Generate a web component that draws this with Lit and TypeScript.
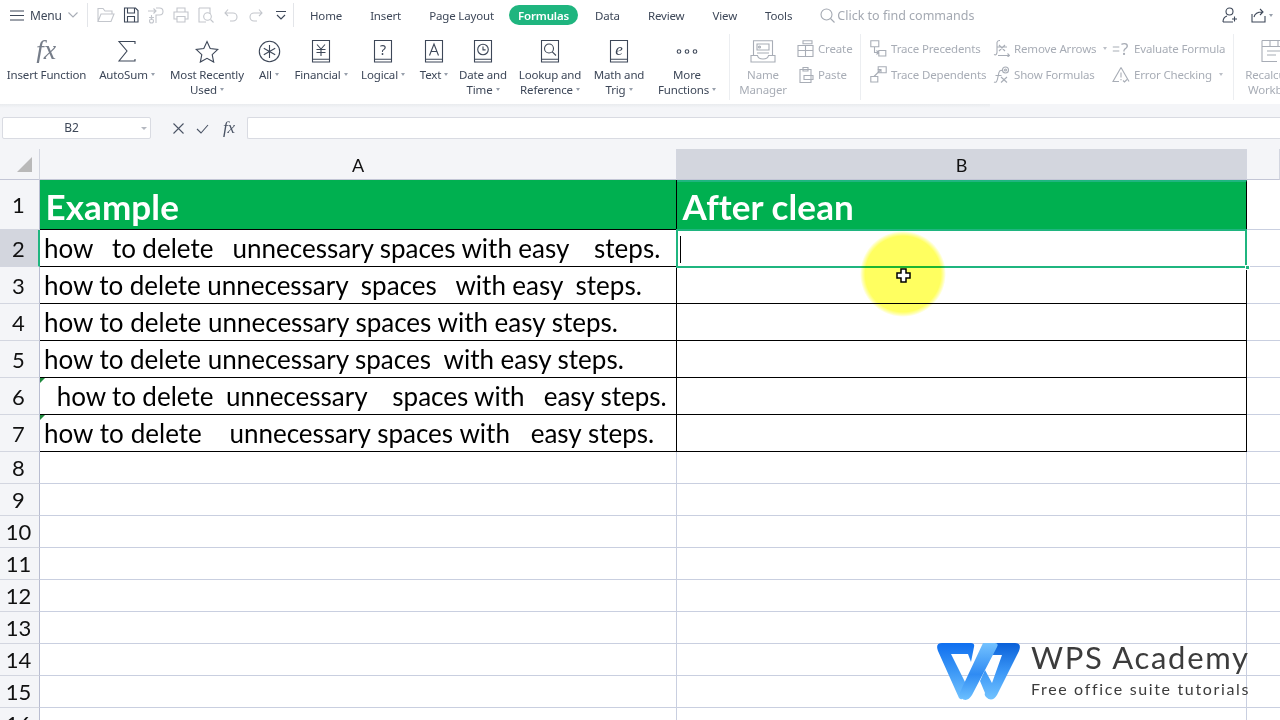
import { LitElement, html, css, svg } from "lit";
import { customElement } from "lit/decorators.js";

const ic = (w: number, h: number, body: unknown, cls = "") =>
  html`<svg class="ic ${cls}" width=${w} height=${h} viewBox="0 0 ${w} ${h}">${body}</svg>`;

const book = (inner: unknown) =>
  ic(20, 23, svg`<path d="M1.5 .5h17v21.5h-17zM1.5 19.2h17"/>${inner}`);
const lbl = (x: number, y: number, t: string, size: number, style = "normal") =>
  svg`<text x=${x} y=${y} text-anchor="middle" font-size=${size} font-style=${style} font-family="Liberation Serif, serif" fill="currentColor" stroke="none">${t}</text>`;
const sans = (x: number, y: number, t: string, size: number) =>
  svg`<text x=${x} y=${y} text-anchor="middle" font-size=${size} font-family="Noto Sans, sans-serif" fill="currentColor" stroke="none">${t}</text>`;

const bigIcons: Record<string, unknown> = {
  fx: ic(26, 23, svg`<g opacity=".7">${lbl(12, 19, "fx", 28, "italic")}</g>`),
  sum: ic(20, 23, svg`<path d="M18 4V1.5H2l8 9.5-8 10h16V19"/>`),
  star: ic(24, 23, svg`<path d="M12 1.500l3.200 7 7.600.9-5.600 5.200 1.500 7.500L12 18.300l-6.700 3.800 1.500-7.500L1.200 9.400l7.600-.9z"/>`),
  all: ic(23, 23, svg`<circle cx="11.5" cy="11.5" r="10.2"/><path d="M11.5 5v13M5.8 8.2l11.4 6.6M17.2 8.2L5.8 14.8"/>`),
  fin: book(svg`<path d="M6 4.5l4 4.5 4-4.5M5.5 9.5h9M5.5 12.500h9M10 9v7"/>`),
  log: book(sans(10, 15, "?", 14)),
  txt: book(svg`<path d="M5.500 15.500L10 4l4.500 11.500M7 11.500h6"/>`),
  date: book(svg`<circle cx="10" cy="9.500" r="5.300"/><path d="M10 6.500v3.400h2.600"/>`),
  look: book(svg`<circle cx="9" cy="8.500" r="4.500"/><path d="M12.300 11.800l3.700 3.700"/>`),
  math: book(lbl(10, 15, "e", 17, "italic")),
  more: ic(24, 23, svg`<circle cx="4" cy="11.5" r="1.8"/><circle cx="12" cy="11.5" r="1.8"/><circle cx="20" cy="11.5" r="1.8"/>`),
  name: ic(28, 23, svg`<path d="M4.500 16V.8h19V16M2 15.500h6.500c.5 3 2 3.500 5.500 3.500s5-.5 5.500-3.500H26v6.500H2zM8 4h12v6H8zM8 13h12"/><circle cx="10.500" cy="7" r="1"/>`),
  recalc: ic(28, 23, svg`<path d="M1 .5h25v20M1 .5v21h15M1 6.500h25M9 .5v6M17 .5v6M6 11h13M6 15h9M23 11v9M20.500 17.500l2.500 3 2.500-3"/>`),
};

const smallIcons: Record<string, unknown> = {
  create: ic(17, 17, svg`<path d="M1 5.500h15v11H1zM1 10.500h15M8.500 5.500v11M6 .8h9v3H6z"/>`),
  paste: ic(17, 17, svg`<path d="M3 3.500h11v13H3zM6 1.500h5v3.500H6zM7 9.500h9v4H7z"/>`),
  prec: ic(17, 17, svg`<path d="M.8 .8h8v6h-8zM8.800 10.500h7v5.500h-7zM4.500 7v5.500h4M6.500 10.500l2 2-2 2"/>`),
  dep: ic(17, 17, svg`<path d="M8.200 .8h8v6h-8zM.8 10.500h7v5.500h-7zM4 10.500l7-7M7.500 3.500H11V7"/>`),
  rem: ic(17, 17, svg`<path d="M1 14.500c2 1 2.500 0 3-2V2.500c.5-2 1-2 3-2M4 7h10M6 5l6 6M12 5l-6 6M5 15.500h11M14.500 13.500l2 2-2 1.500"/>`),
  show: ic(17, 17, svg`<path d="M1 16c2 1 3-.5 3.500-3l1.300-6C6.300 5 7 4 9 4.500M2.500 9.500h6M8 11l6 5.500M14 11l-6 5.500"/><circle cx="12.500" cy="4" r="3"/><circle cx="12.500" cy="4" r="1"/>`),
  evalf: ic(18, 17, svg`<path d="M.8 7h6.500M.8 11h6.500"/>${sans(12.500, 14.500, "?", 17)}`),
  err: ic(18, 17, svg`<path d="M9 1.500L1 15.500h6M9 1.500l8 14M9 6.500v5M9 13v1.200M11 14.500l1.500 1.500 2.500-2.500"/>`),
};

const big = [
  { w: 87, l: ["Insert Function"], i: "fx" },
  { w: 74, l: ["AutoSum"], i: "sum", c: 1 },
  { w: 86, l: ["Most Recently", "Used"], i: "star", c: 1 },
  { w: 38, l: ["All"], i: "all", c: 1 },
  { w: 66, l: ["Financial"], i: "fin", c: 1 },
  { w: 58, l: ["Logical"], i: "log", c: 1 },
  { w: 44, l: ["Text"], i: "txt", c: 1 },
  { w: 54, l: ["Date and", "Time"], i: "date", c: 1 },
  { w: 80, l: ["Lookup and", "Reference"], i: "look", c: 1 },
  { w: 58, l: ["Math and", "Trig"], i: "math", c: 1 },
  { w: 78, l: ["More", "Functions"], i: "more", c: 1 },
];

const tabs = ["Home", "Insert", "Page Layout", "Formulas", "Data", "Review", "View", "Tools"];
const rows = [
  { t: "Example", ws: 0 },
  { t: "how   to delete   unnecessary spaces with easy    steps.", ws: -0.3 },
  { t: "how to delete unnecessary  spaces   with easy  steps.", ws: -0.25 },
  { t: "how to delete unnecessary spaces with easy steps.", ws: 0 },
  { t: "how to delete unnecessary spaces  with easy steps.", ws: -0.1 },
  { t: "  how to delete  unnecessary    spaces with   easy steps.", ws: -0.3 },
  { t: "how to delete    unnecessary spaces with   easy steps.", ws: 0.25 },
];

@customElement("app-root")
export class AppRoot extends LitElement {
  static styles = css`
    :host { display: block; width: 1280px; height: 720px; overflow: hidden; position: relative; background: #fff; font-family: "Noto Sans", sans-serif; font-size: 11.5px; letter-spacing: -.15px; color: #3d4758; }
    .ic { display: block; flex: none; fill: none; stroke: currentColor; stroke-width: 1.1; }
    .top { height: 32px; display: flex; align-items: center; padding-left: 10px; }
    .menu { display: flex; align-items: center; gap: 6px; width: 77px; flex: none; font-size: 12px; margin-top: -2px; }
    .vsep { width: 1px; height: 24px; background: #e3e5e9; flex: none; margin-top: -2px; }
    .qat { display: flex; align-items: center; padding-left: 5px; width: 205px; box-sizing: border-box; color: #c3c6cc; flex: none; margin-top: -2px; }
    .qbox { width: 25px; display: flex; justify-content: center; flex: none; }
    .qat .on { color: #3d4758; }
    .tabs { display: flex; align-items: center; padding-left: 16px; flex: none; height: 32px; margin-top: -2px; }
    .tab { height: 20px; line-height: 21px; white-space: nowrap; margin-right: 28px; }
    .tab.pre { margin-right: 15px; }
    .tab.act { background: #1fb57f; color: #fff; font-weight: 600; margin-right: 17px; width: 69px; text-align: center; border-radius: 10px; }
    .search { display: flex; align-items: center; gap: 2px; color: #a4a9b2; font-size: 12.5px; letter-spacing: 0; flex: none; margin-top: -2px; }
    .right { position: absolute; left: 1222px; top: 7px; display: flex; gap: 13px; align-items: center; color: #3d4758; }
    .right i { border: 2.500px solid transparent; border-top: 3px solid #98a0ac; border-bottom: 0; margin-left: -11px; }
    .ribbon { height: 72px; display: flex; overflow: hidden; padding-left: 3px; }
    .item { flex: none; padding-top: 8px; display: flex; flex-direction: column; align-items: center; box-sizing: border-box; }
    .item .iconbox { height: 22px; display: flex; align-items: center; justify-content: center; }
    .item .lbl { margin-top: 5px; line-height: 15px; text-align: center; white-space: nowrap; }
    .caret { display: inline-block; width: 0; height: 0; border: 2.500px solid transparent; border-top: 3px solid #98a0ac; border-bottom: 0; margin-left: 3px; vertical-align: 3px; }
    .off { color: #a8adb6; }
    .off .caret { border-top-color: #bcc0c7; }
    .rsep { width: 1px; height: 66px; margin-top: 2px; background: #eceef1; flex: none; }
    .rsep.first { margin-left: 3px; }
    .colname { width: 64px; padding-left: 1px; }
    .coltrace { width: 132px; padding-left: 9px; }
    .colrem { width: 119px; }
    .coleval { width: 121px; }
    .w66 { width: 66px; }
    .w82 { width: 82px; }
    .col { flex: none; padding-top: 3px; box-sizing: border-box; }
    .small { height: 26px; display: flex; align-items: center; gap: 4px; white-space: nowrap; }
    .formula { height: 45px; background: #f4f5f8; position: relative; display: flex; align-items: center; padding-left: 2px; padding-top: 3px; box-sizing: border-box; }
    .formula::before { content: ""; position: absolute; left: 0; top: 0; width: 990px; height: 4px; background: linear-gradient(#e9ebee, #f4f5f8); }
    .namebox { width: 149px; height: 22px; box-sizing: border-box; border: 1px solid #d9dbe2; border-radius: 2px; background: #fff; text-align: center; line-height: 20px; flex: none; position: relative; padding-right: 10px; font-size: 12px; }
    .namebox i { position: absolute; right: 3px; top: 9px; border: 3px solid transparent; border-top: 3px solid #b4b8c0; border-bottom: 0; }
    .fb { display: flex; align-items: center; color: #4a5364; margin-left: 21px; gap: 11px; flex: none; width: 75px; }
    .input { flex: 1; height: 22px; box-sizing: border-box; border: 1px solid #d9dbe2; border-right: 0; border-radius: 2px 0 0 2px; background: #fff; }
    .sheet { display: grid; grid-template-columns: 40px 637px 570px 33px; grid-template-rows: 31px 50px repeat(6, 37px) repeat(9, 32px); font-family: Lato, sans-serif; letter-spacing: 0; background: #fff; color: #000; height: 571px; overflow: hidden; }
    .cell { box-sizing: border-box; position: relative; white-space: pre; overflow: hidden; }
    .ch { background: #f4f5f8; border-right: 1px solid #d3d6e0; border-bottom: 1px solid #c3c6d6; text-align: center; font-size: 18px; line-height: 32px; color: #111; }
    .ch.sel, .rh.sel { background: #d3d6de; }
    .corner svg { position: absolute; left: 17px; top: 8px; }
    .rh { background: #f4f5f8; border-right: 1px solid #b9bdd1; border-bottom: 1px solid #d3d6e0; font-size: 22px; display: flex; align-items: center; justify-content: center; padding-right: 2px; color: #111; }
    .rh.sel { border-right: 2px solid #1fb57f; padding-right: 1px; }
    .g { border-right: 1px solid #c9cfe0; border-bottom: 1px solid #c9cfe0; }
    .none { border-bottom: 1px solid #c9cfe0; }
    .t { border-right: 1px solid #000; border-bottom: 1px solid #000; font-size: 26px; line-height: 36px; padding-left: 4px; }
    .hd { background: #00b050; color: #fff; font-weight: 700; font-size: 35px; letter-spacing: .1px; line-height: 52px; padding-left: 5.500px; }
    .hd.b { border-top: 2px solid #1fb57f; line-height: 48px; }
    .mark { position: absolute; left: 0; top: 0; width: 0; height: 0; border-top: 5px solid #1f8a3d; border-right: 5px solid transparent; }
    .selbox { position: absolute; left: 676px; top: 229px; width: 571px; height: 39px; box-sizing: border-box; border: 2px solid #1fb57f; pointer-events: none; }
    .caretline { position: absolute; left: 680px; top: 236px; width: 1px; height: 27px; background: #000; }
    .handle { position: absolute; left: 1245px; top: 265px; width: 5px; height: 5px; background: #1fb57f; border: 1px solid #fff; box-sizing: border-box; }
    .spot { position: absolute; left: 860px; top: 231px; width: 86px; height: 86px; border-radius: 50%; background: radial-gradient(circle closest-side, #ffff60 0 88%, #ffffa8 94%, rgba(255,255,200,0) 100%); mix-blend-mode: multiply; }
    .cursor { position: absolute; left: 896px; top: 268px; }
    .logo { position: absolute; left: 937px; top: 643px; }
    .wm { position: absolute; left: 1031px; top: 638px; color: #3c3c3c; white-space: nowrap; letter-spacing: 0; }
    .wm .a { font-size: 31px; line-height: 38px; letter-spacing: 1.7px; font-family: Lato, sans-serif; font-weight: 400; }
    .wm .b { font-size: 16px; line-height: 22px; letter-spacing: 1.65px; font-family: Lato, sans-serif; margin-top: 2px; }
  `;

  render() {
    const qat = [
      ic(18, 16, svg`<path d="M1 14.500V1.500h5l2 2.500h7v3M1 14.500l3-7.500h13l-3 7.500z"/>`),
      ic(16, 16, svg`<path d="M1.500 1h11l2.500 2.500V15H1.500zM4.500 1v5h7V1M4.500 15V9.500h7V15"/>`, "on"),
      ic(18, 17, svg`<path d="M1 4h8M6.500 1.500L9 4 6.500 6.500M9 1h3.500a3.500 3.500 0 010 7H9v8M4.500 8v5M2 10.500h5"/><circle cx="4.500" cy="14" r="2"/>`),
      ic(16, 16, svg`<path d="M4 5V1h8v4M4 12H1V5h14v7h-3M4 9.500h8V15H4z"/>`),
      ic(16, 16, svg`<path d="M1 1h11v6M1 1v14h7"/><circle cx="9.500" cy="9.500" r="3.800"/><path d="M12.500 12.500L15.500 15.500"/>`),
      ic(14, 14, svg`<path d="M1 5h8a4 4 0 010 8H6M4 1.500L1 5l3 3"/>`),
      ic(14, 14, svg`<path d="M13 5H5a4 4 0 000 8h3M10 1.500L13 5l-3 3"/>`),
      ic(10, 9, svg`<path d="M0 .5h10M1 4l4 4 4-4"/>`, "on"),
    ];
    return html`
      <div class="top">
        <div class="menu">
          ${ic(14, 11, svg`<path d="M0 1h14M0 5.500h14M0 10h14"/>`)}
          <span>Menu</span>
          ${ic(10, 6, svg`<path d="M.5 .5L5 5 9.500 .5"/>`, "off")}
        </div>
        <div class="vsep"></div>
        <div class="qat">${qat.map((q) => html`<div class="qbox">${q}</div>`)}</div>
        <div class="vsep"></div>
        <div class="tabs">${tabs.map((t) => html`<div class="tab ${t === "Formulas" ? "act" : ""} ${t === "Page Layout" ? "pre" : ""}">${t}</div>`)}</div>
        <div class="search">
          ${ic(15, 15, svg`<circle cx="6.500" cy="6.500" r="5.500"/><path d="M10.500 10.500L14.500 14.500"/>`)}
          <span>Click to find commands</span>
        </div>
        <div class="right">
          ${ic(16, 16, svg`<circle cx="7.500" cy="4.500" r="3.500"/><path d="M1 15c0-3 1-5 4-6M1 15h10M10 12h5M12.500 9.500v5"/>`)}
          ${ic(16, 15, svg`<path d="M1 6v8h13V8M3 9c1-4 4-5 8-5M9 1l3 3-3 3"/>`)}
          <i></i>
        </div>
      </div>
      <div class="ribbon">
        ${big.map((b) => html`
          <div class="item" style="width:${b.w}px">
            <div class="iconbox">${bigIcons[b.i]}</div>
            <div class="lbl">${b.l.map((s, i) => html`${i ? html`<br />` : ""}${s}${i === b.l.length - 1 && b.c ? html`<span class="caret"></span>` : ""}`)}</div>
          </div>`)}
        <div class="rsep first"></div>
        <div class="item off w66">
          <div class="iconbox">${bigIcons.name}</div>
          <div class="lbl">Name<br />Manager</div>
        </div>
        <div class="col off colname">
          <div class="small">${smallIcons.create}Create</div>
          <div class="small">${smallIcons.paste}Paste</div>
        </div>
        <div class="rsep"></div>
        <div class="col off coltrace">
          <div class="small">${smallIcons.prec}Trace Precedents</div>
          <div class="small">${smallIcons.dep}Trace Dependents</div>
        </div>
        <div class="col off colrem">
          <div class="small">${smallIcons.rem}Remove Arrows<span class="caret"></span></div>
          <div class="small">${smallIcons.show}Show Formulas</div>
        </div>
        <div class="col off coleval">
          <div class="small">${smallIcons.evalf}Evaluate Formula</div>
          <div class="small">${smallIcons.err}Error Checking<span class="caret"></span></div>
        </div>
        <div class="rsep"></div>
        <div class="item off w82">
          <div class="iconbox">${bigIcons.recalc}</div>
          <div class="lbl">Recalculate<br />Workbook</div>
        </div>
      </div>
      <div class="formula">
        <div class="namebox">B2<i></i></div>
        <div class="fb">
          ${ic(13, 13, svg`<path d="M1.500 1.500l10 10M11.500 1.500l-10 10"/>`)}
          ${ic(13, 13, svg`<path d="M1 7l4 4 7-8"/>`)}
          ${ic(18, 18, svg`${lbl(9, 14, "fx", 17, "italic")}`)}
        </div>
        <div class="input"></div>
      </div>
      <div class="sheet">
        <div class="cell ch corner"><svg width="16" height="16"><path d="M15 0v15H0z" fill="#b9b9b9"/></svg></div>
        <div class="cell ch">A</div>
        <div class="cell ch sel">B</div>
        <div class="cell ch"></div>
        ${rows.map((r, i) => html`
          <div class="cell rh ${i === 1 ? "sel" : ""}">${i + 1}</div>
          <div class="cell t ${i === 0 ? "hd" : ""}" style="word-spacing:${r.ws}px">${r.t}${i === 5 || i === 6 ? html`<span class="mark"></span>` : ""}</div>
          <div class="cell t ${i === 0 ? "hd b" : ""}">${i === 0 ? "After clean" : ""}</div>
          <div class="cell none"></div>`)}
        ${[8, 9, 10, 11, 12, 13, 14, 15, 16].map((n) => html`
          <div class="cell rh">${n}</div>
          <div class="cell g"></div>
          <div class="cell g"></div>
          <div class="cell none"></div>`)}
      </div>
      <div class="selbox"></div>
      <div class="caretline"></div>
      <div class="handle"></div>
      <div class="spot"></div>
      <svg class="cursor" width="15" height="15" viewBox="0 0 15 15"><path d="M5 1h5v4h4v5h-4v4H5v-4H1V5h4z" fill="#fff" stroke="#000" stroke-width="1.500"/></svg>
      <svg class="logo" width="84" height="58" viewBox="0 0 84 58">
        <defs>
          <linearGradient id="l1" gradientUnits="userSpaceOnUse" x1="0" y1="0" x2="0" y2="57"><stop offset="0" stop-color="#0f6ff0"/><stop offset=".5" stop-color="#3c98f6"/><stop offset="1" stop-color="#74c4ff"/></linearGradient>
          <linearGradient id="l2" gradientUnits="userSpaceOnUse" x1="0" y1="0" x2="0" y2="57"><stop offset="0" stop-color="#74c2ff"/><stop offset=".55" stop-color="#2f8bf3"/><stop offset="1" stop-color="#6cc0ff"/></linearGradient>
          <linearGradient id="l3" gradientUnits="userSpaceOnUse" x1="0" y1="0" x2="0" y2="57"><stop offset="0" stop-color="#0a60d8"/><stop offset=".5" stop-color="#3a96f6"/><stop offset="1" stop-color="#74c4ff"/></linearGradient>
        </defs>
        <path d="M5 0H34Q38 0 37 4L34 19L31 11H14L29 41L25 56Q24 57 22 55L1 8Q-2 0 5 0Z" fill="url(#l1)"/>
        <path d="M52 0H78Q85 0 82 8L60 52Q55 60 49 54Q47 52 48 50L43 38L48 27L55 40L65 12H52Z" fill="url(#l3)"/>
        <path d="M46 0H58Q62 0 60 4L35 52Q30 60 24 55Q21 53 24 47Z" fill="url(#l2)"/>
      </svg>
      <div class="wm"><div class="a">WPS Academy</div><div class="b">Free office suite tutorials</div></div>
    `;
  }
}
